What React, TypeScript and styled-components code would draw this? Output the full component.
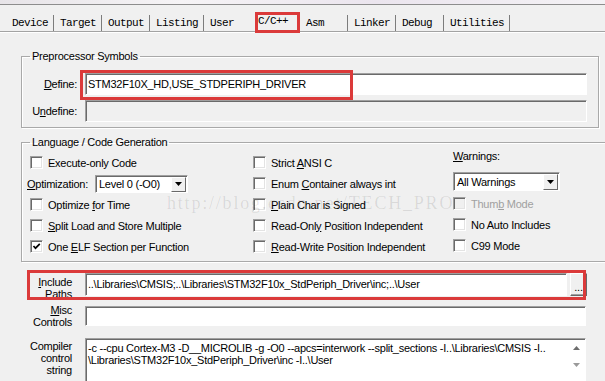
import React from "react";
import styled, { createGlobalStyle } from "styled-components";

const GlobalStyle = createGlobalStyle`
  html, body {
    margin: 0;
    padding: 0;
    background: #f0f0f0;
  }
  body {
    font-family: "Liberation Sans", Arial, sans-serif;
    font-size: 11px;
    color: #000;
  }
`;

const Frame = styled.div`
  position: relative;
  width: 605px;
  height: 381px;
  overflow: hidden;
  background: #f0f0f0;
  letter-spacing: -0.25px;
`;

const TitleStrip = styled.div`
  height: 4px;
  background: linear-gradient(to right, #e7e4e8, #f6f4f6 30%, #ebe5ee 62%, #f4f2f5);
`;

const TabBar = styled.div`
  display: flex;
  align-items: flex-end;
  height: 26px;
  padding-left: 6px;
  border-top: 1px solid #8d8d8d;
  border-bottom: 1px solid #a3a3a3;
  box-shadow: 0 1px 0 #fff;
`;

const Tab = styled.div<{ $active?: boolean; $noSep?: boolean }>`
  position: relative;
  box-sizing: content-box;
  height: ${(p) => (p.$active ? 13 : 16)}px;
  line-height: ${(p) => (p.$active ? 13 : 16)}px;
  padding: 0 5px ${(p) => (p.$active ? 3 : 0)}px 6px;
  min-width: 36px;
  font-family: "Liberation Mono", monospace;
  font-size: 11px;
  letter-spacing: -0.6px;
  border-right: 1px solid ${(p) => (p.$noSep ? "transparent" : "#7c7c7c")};
`;

const Highlight = styled.div<{ $box: [number, number, number, number] }>`
  position: absolute;
  left: ${(p) => p.$box[0]}px;
  top: ${(p) => p.$box[1]}px;
  width: ${(p) => p.$box[2]}px;
  height: ${(p) => p.$box[3]}px;
  box-sizing: border-box;
  border: 3px solid #db3a3a;
  pointer-events: none;
  z-index: 2;
`;

const Page = styled.div`
  padding: 18px 0 0 21px;
`;

const Group = styled.fieldset<{ $right: number; $gap?: number }>`
  margin: ${(p) => p.$gap ?? 0}px ${(p) => p.$right}px 0 0;
  padding: 0;
  min-width: 0;
  border: 1px solid #a9a9a9;
  box-shadow: inset 1px 1px 0 #fff, 1px 1px 0 #fff;
`;

const Legend = styled.legend`
  margin-left: 8px;
  padding: 0 2px;
  line-height: 13px;
`;

const SymbolGrid = styled.div`
  position: relative;
  display: grid;
  grid-template-columns: 55px 1fr;
  column-gap: 8px;
  row-gap: 5px;
  align-items: center;
  padding: 10px 11px 5px 0;
`;

const RightLabel = styled.div`
  text-align: right;
  white-space: nowrap;
`;

const Field = styled.div<{ $height: number; $disabled?: boolean }>`
  box-sizing: border-box;
  height: ${(p) => p.$height}px;
  line-height: ${(p) => p.$height - 2}px;
  padding: 0 2px;
  background: ${(p) => (p.$disabled ? "#f0f0f0" : "#fff")};
  border: 1px solid;
  border-color: #a0a0a0 #fff #fff #a0a0a0;
  box-shadow: inset 1px 1px 0 #6a6a6a;
  white-space: nowrap;
  overflow: hidden;
  flex: 1;
`;

const Columns = styled.div`
  display: grid;
  grid-template-columns: 223px 200px 1fr;
  padding: 3px 0 4px 8px;
`;

const Column = styled.div`
  display: flex;
  flex-direction: column;
`;

const Row = styled.div<{ $gap?: number }>`
  display: flex;
  align-items: center;
  height: 21px;
  gap: ${(p) => p.$gap ?? 5}px;
  white-space: nowrap;
`;

const Text = styled.span<{ $disabled?: boolean }>`
  color: ${(p) => (p.$disabled ? "#a0a0a0" : "#000")};
`;

const U = styled.span`
  text-decoration: underline;
`;

const Box = styled.span<{ $disabled?: boolean }>`
  box-sizing: border-box;
  flex: none;
  width: 13px;
  height: 13px;
  display: flex;
  align-items: center;
  justify-content: center;
  background: ${(p) => (p.$disabled ? "#f0f0f0" : "#fff")};
  border: 1px solid;
  border-color: #a0a0a0 #fff #fff #a0a0a0;
  box-shadow: inset 1px 1px 0 #6a6a6a, inset -1px -1px 0 #e3e3e3;
`;

const OptLabel = styled.span`
  width: 68px;
  margin-left: -3px;
`;

const Select = styled.div<{ $width: number; $height: number }>`
  box-sizing: border-box;
  display: flex;
  align-items: stretch;
  width: ${(p) => p.$width}px;
  height: ${(p) => p.$height}px;
  background: #fff;
  border: 1px solid;
  border-color: #a0a0a0 #fff #fff #a0a0a0;
  box-shadow: inset 1px 1px 0 #6a6a6a;
  padding: 1px 1px 0 1px;
`;

const SelectValue = styled.span`
  flex: 1;
  padding-left: 2px;
  display: flex;
  align-items: center;
`;

const DropButton = styled.span`
  box-sizing: border-box;
  width: 15px;
  display: flex;
  align-items: center;
  justify-content: center;
  background: #f0f0f0;
  border: 1px solid;
  border-color: #fff #696969 #696969 #fff;
`;

const WarnLabel = styled.div`
  line-height: 14px;
  margin: -3px 0 9px 0;
`;

const WarnChecks = styled.div`
  margin-top: 2px;
`;

const Bottom = styled.div`
  position: relative;
  display: grid;
  grid-template-columns: 51px 1fr;
  grid-template-rows: 31px 33px auto;
  column-gap: 13px;
  margin: 10px 19px 0 0;
`;

const StackLabel = styled.div<{ $top: number }>`
  text-align: right;
  line-height: 12px;
  margin-top: ${(p) => p.$top}px;
`;

const FieldRow = styled.div<{ $top: number }>`
  display: flex;
  gap: 3px;
  margin-top: ${(p) => p.$top}px;
  align-self: start;
`;

const BrowseButton = styled.div`
  box-sizing: border-box;
  width: 17px;
  height: 23px;
  margin-right: -1px;
  background: #f0f0f0;
  border: 1px solid;
  border-color: #fff #696969 #696969 #fff;
  box-shadow: inset -1px -1px 0 #a0a0a0;
  display: flex;
  align-items: flex-end;
  justify-content: center;
  line-height: 12px;
  padding-bottom: 2px;
`;

const TextArea = styled.div`
  box-sizing: border-box;
  display: flex;
  height: 50px;
  background: #fff;
  border: 1px solid;
  border-color: #a0a0a0 #fff #fff #a0a0a0;
  box-shadow: inset 1px 1px 0 #6a6a6a;
  margin-top: 2px;
`;

const AreaText = styled.div`
  flex: 1;
  padding: 3px 0 0 2px;
  line-height: 12px;
  white-space: pre;
  overflow: hidden;
`;

const ScrollBar = styled.div`
  width: 17px;
  display: flex;
  flex-direction: column;
  align-items: center;
  gap: 13px;
  padding-top: 7px;
`;

const Watermark = styled.div`
  position: absolute;
  left: 167px;
  top: 193px;
  font-family: "Liberation Serif", "Times New Roman", serif;
  font-size: 18px;
  letter-spacing: 1.8px;
  color: rgba(0, 0, 0, 0.1);
  pointer-events: none;
  white-space: nowrap;
  z-index: 3;
`;

const Arrow = ({ up, color = "#000" }: { up?: boolean; color?: string }) => (
  <svg width="7" height="4" viewBox="0 0 7 4">
    <polygon points={up ? "0,4 7,4 3.5,0" : "0,0 7,0 3.5,4"} fill={color} />
  </svg>
);

const Check = () => (
  <svg width="9" height="9" viewBox="0 0 9 9">
    <path d="M1.5 4 L3.5 6.2 L7.8 1.8" fill="none" stroke="#000" strokeWidth="1.7" />
  </svg>
);

const CheckBox = ({
  label,
  checked,
  disabled,
}: {
  label: React.ReactNode;
  checked?: boolean;
  disabled?: boolean;
}) => (
  <Row>
    <Box $disabled={disabled}>{checked && <Check />}</Box>
    <Text $disabled={disabled}>{label}</Text>
  </Row>
);

const tabs = ["Device", "Target", "Output", "Listing", "User", "C/C++", "Asm", "Linker", "Debug", "Utilities"];

const compilerLines = [
  "-c --cpu Cortex-M3 -D__MICROLIB -g -O0 --apcs=interwork --split_sections -I..\\Libraries\\CMSIS -I..",
  "\\Libraries\\STM32F10x_StdPeriph_Driver\\inc -I..\\User",
];

const App = () => {
  return (
    <Frame>
      <GlobalStyle />
      <TitleStrip />
      <TabBar>
        {tabs.map((t) => (
          <Tab key={t} $active={t === "C/C++"} $noSep={t === "User"}>
            {t}
            {t === "C/C++" && <Highlight $box={[3, -3, 45, 21]} />}
          </Tab>
        ))}
      </TabBar>

      <Page>
        <Group $right={6}>
          <Legend>Preprocessor Symbols</Legend>
          <SymbolGrid>
            <RightLabel>
              <U>D</U>efine:
            </RightLabel>
            <Field $height={22}>STM32F10X_HD,USE_STDPERIPH_DRIVER</Field>
            <RightLabel>
              U<U>n</U>define:
            </RightLabel>
            <Field $height={22} $disabled />
            <Highlight $box={[58, 7, 273, 30]} />
          </SymbolGrid>
        </Group>

        <Group $right={-6} $gap={8}>
          <Legend>Language / Code Generation</Legend>
          <Columns>
            <Column>
              <CheckBox label="Execute-only Code" />
              <Row $gap={0}>
                <OptLabel>
                  <U>O</U>ptimization:
                </OptLabel>
                <Select $width={93} $height={18}>
                  <SelectValue>Level 0 (-O0)</SelectValue>
                  <DropButton>
                    <Arrow />
                  </DropButton>
                </Select>
              </Row>
              <CheckBox
                label={
                  <>
                    Optimize <U>f</U>or Time
                  </>
                }
              />
              <CheckBox
                label={
                  <>
                    <U>S</U>plit Load and Store Multiple
                  </>
                }
              />
              <CheckBox
                checked
                label={
                  <>
                    One <U>E</U>LF Section per Function
                  </>
                }
              />
            </Column>
            <Column>
              <CheckBox
                label={
                  <>
                    Strict <U>A</U>NSI C
                  </>
                }
              />
              <CheckBox
                label={
                  <>
                    Enum <U>C</U>ontainer always int
                  </>
                }
              />
              <CheckBox
                label={
                  <>
                    <U>P</U>lain Char is Signed
                  </>
                }
              />
              <CheckBox
                label={
                  <>
                    Read-Onl<U>y</U> Position Independent
                  </>
                }
              />
              <CheckBox
                label={
                  <>
                    <U>R</U>ead-Write Position Independent
                  </>
                }
              />
            </Column>
            <Column>
              <WarnLabel>
                <U>W</U>arnings:
              </WarnLabel>
              <Select $width={107} $height={19}>
                <SelectValue>All Warnings</SelectValue>
                <DropButton>
                  <Arrow />
                </DropButton>
              </Select>
              <WarnChecks>
                <CheckBox
                  disabled
                  label={
                    <>
                      Thum<U>b</U> Mode
                    </>
                  }
                />
                <CheckBox label="No Auto Includes" />
                <CheckBox label="C99 Mode" />
              </WarnChecks>
            </Column>
          </Columns>
        </Group>

        <Bottom>
          <StackLabel $top={4}>
            <U>I</U>nclude
            <br />
            Paths
          </StackLabel>
          <FieldRow $top={1}>
            <Field $height={23}>..\Libraries\CMSIS;..\Libraries\STM32F10x_StdPeriph_Driver\inc;..\User</Field>
            <BrowseButton>...</BrowseButton>
          </FieldRow>

          <StackLabel $top={1}>
            <U>M</U>isc
            <br />
            Controls
          </StackLabel>
          <FieldRow $top={3}>
            <Field $height={20} />
          </FieldRow>

          <StackLabel $top={4}>
            Compiler
            <br />
            control
            <br />
            string
          </StackLabel>
          <TextArea>
            <AreaText>{compilerLines.join("\n")}</AreaText>
            <ScrollBar>
              <Arrow up color="#6d6d6d" />
              <Arrow color="#9a9a9a" />
            </ScrollBar>
          </TextArea>
          <Highlight $box={[6, -2, 559, 30]} />
        </Bottom>
      </Page>

      <Watermark>http://blog.csdn.net/TECH_PRO</Watermark>
    </Frame>
  );
};

export default App;
